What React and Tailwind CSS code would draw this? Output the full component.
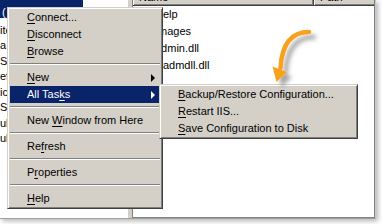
import React from 'react'

const FONT = { fontFamily: '"Liberation Sans", Arial, sans-serif' }

const treeTail = ['ites', 'a', 'Sil', 'efa', 'ic', 'Se', 'ult', 'ult']

const files = [
  { name: 'Help', folder: true },
  { name: 'Images', folder: true },
  { name: 'admin.dll' },
  { name: 'isadmdll.dll' },
]

const mainMenu = [
  { label: 'Connect...', key: 0 },
  { label: 'Disconnect', key: 0 },
  { label: 'Browse', key: 0 },
  { sep: true },
  { label: 'New', key: 0, sub: true },
  { label: 'All Tasks', key: 7, sub: true, active: true },
  { sep: true },
  { label: 'New Window from Here', key: 4 },
  { sep: true },
  { label: 'Refresh', key: 2 },
  { sep: true },
  { label: 'Properties', key: 1 },
  { sep: true },
  { label: 'Help', key: 0 },
]

const taskMenu = [
  { label: 'Backup/Restore Configuration...', key: 0 },
  { label: 'Restart IIS...', key: 0 },
  { label: 'Save Configuration to Disk', key: 0 },
]

function Label({ text, at }) {
  return (
    <span>
      {text.slice(0, at)}
      <u className="underline underline-offset-[2px]">{text[at]}</u>
      {text.slice(at + 1)}
    </span>
  )
}

function MenuBox({ items, className, indent }) {
  return (
    <div
      className={`absolute bg-[#d4d0c8] border border-t-[#d4d0c8] border-l-[#d4d0c8] border-r-[#404040] border-b-[#404040] shadow-[inset_1px_1px_0_#ffffff,inset_-1px_-1px_0_#808080] px-[2px] py-[1px] ${className}`}
    >
      {items.map((it, i) =>
        it.sep ? (
          <div key={i} className="h-[9px] pt-[3px]">
            <div className="h-[2px] border-t border-t-[#808080] border-b border-b-white" />
          </div>
        ) : (
          <div
            key={i}
            className={`h-[17px] flex items-center justify-between pr-[5px] ${indent} ${
              it.active ? 'bg-[#0a246a] text-white' : 'text-black'
            }`}
          >
            <Label text={it.label} at={it.key} />
            {it.sub && (
              <span
                className={`w-0 h-0 border-y-[4px] border-y-transparent border-l-[4px] ${
                  it.active ? 'border-l-white' : 'border-l-black'
                }`}
              />
            )}
          </div>
        )
      )}
    </div>
  )
}

function FileIcon({ folder }) {
  return folder ? (
    <svg width="16" height="16" viewBox="0 0 16 16">
      <path d="M1 4h5l1 1h7v8H1z" fill="#f5d56b" stroke="#a08020" />
    </svg>
  ) : (
    <svg width="16" height="16" viewBox="0 0 16 16">
      <path d="M3 1h7l3 3v11H3z" fill="#fff" stroke="#808080" />
      <rect x="5" y="7" width="6" height="5" fill="#6080c0" />
    </svg>
  )
}

function Arrow() {
  return (
    <svg className="absolute left-[260px] top-[22px]" width="66" height="72" viewBox="0 0 66 72">
      <defs>
        <filter id="sh" x="-30%" y="-30%" width="160%" height="160%">
          <feDropShadow dx="5" dy="5" stdDeviation="2" floodColor="#000" floodOpacity="0.35" />
        </filter>
      </defs>
      <g filter="url(#sh)">
        <path d="M49 10 C 34 10, 22 19, 20.5 46" fill="none" stroke="#f8a11c" strokeWidth="4.5" strokeLinecap="round" />
        <polygon points="12.5,44.5 27,50 16.5,60" fill="#f8a11c" />
      </g>
    </svg>
  )
}

export default function App() {
  return (
    <div className="relative w-[382px] h-[224px] bg-white overflow-hidden text-[11px]" style={FONT}>
      <div className="flex w-[376px] h-[219px] border-r border-b border-r-[#c8c8c8] border-b-[#a0a0a0] shadow-[2px_2px_5px_rgba(0,0,0,0.3)]">
        {/* tree pane */}
        <div className="w-[127px] bg-white flex flex-col">
          <div className="h-[18px] w-[83px] bg-[#0a246a] text-white flex items-center pt-[6px] pl-[2px]">(</div>
          <div className="mt-[4px] flex flex-col">
            {treeTail.map((t, i) => (
              <div key={i} className="h-[15.5px] flex items-center whitespace-nowrap text-black">
                {t}
              </div>
            ))}
          </div>
        </div>
        {/* splitter */}
        <div className="w-[5px] bg-[#d4d0c8] border-l border-l-white" />
        {/* list pane */}
        <div className="flex-1 bg-white flex flex-col border-l border-l-[#808080] border-r border-r-[#808080] border-b border-b-[#808080] overflow-hidden">
          <div className="h-[18px] -mt-[12px] flex shrink-0">
            <div className="w-[181px] flex items-end pb-[2px] pl-[6px] leading-[11px] bg-[#d4d0c8] border-r border-b border-r-[#404040] border-b-[#404040] shadow-[inset_1px_1px_0_#ffffff,inset_-1px_-1px_0_#808080]">
              Name
            </div>
            <div className="flex-1 flex items-end pb-[2px] pl-[6px] leading-[11px] bg-[#d4d0c8] border-b border-b-[#404040] shadow-[inset_1px_1px_0_#ffffff,inset_0_-1px_0_#808080]">
              Path
            </div>
          </div>
          {files.map((f) => (
            <div key={f.name} className="h-[17px] flex items-center gap-[2px] pl-[4px] text-black">
              <FileIcon folder={f.folder} />
              <span>{f.name}</span>
            </div>
          ))}
        </div>
      </div>

      <MenuBox items={mainMenu} className="left-[7px] top-[7px] w-[156px]" indent="pl-[17px]" />
      <MenuBox items={taskMenu} className="left-[159px] top-[84px] w-[199px]" indent="pl-[16px]" />
      <Arrow />
    </div>
  )
}
